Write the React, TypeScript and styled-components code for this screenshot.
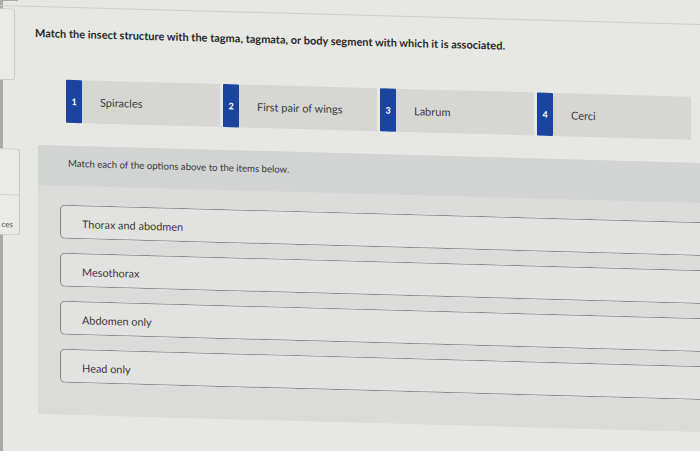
import React from 'react'
import styled, { createGlobalStyle } from 'styled-components'

const colors = {
  screen: '#e7e7e4',
  edge: '#a9a9a6',
  line: '#cfcfcb',
  ink: '#2a2a2a',
  text: '#3a3a3a',
  chip: '#d6d6d3',
  badge: '#1b449e',
  panel: '#dbdbd9',
  panelHead: '#d2d3d3',
  answer: '#e2e2e0',
  answerBorder: '#80868c',
}

const GlobalStyle = createGlobalStyle`
  html, body {
    margin: 0;
    padding: 0;
    overflow: hidden;
    background: ${colors.screen};
  }
  body {
    font-family: Lato, 'Liberation Sans', sans-serif;
  }
`

// the whole screen sits with a slight tilt
const Page = styled.div`
  width: 700px;
  height: 451px;
  display: flex;
  flex-direction: column;
  background: ${colors.screen};
  box-shadow: inset 3px 0 0 ${colors.edge};
  transform: skewY(1.55deg);
  transform-origin: 0 0;
  overflow: hidden;
`
const TopBar = styled.div`
  height: 5px;
  flex-shrink: 0;
  border-bottom: 1px solid ${colors.line};
`
const Body = styled.div`
  display: flex;
  flex: 1;
  min-height: 0;
`
const Side = styled.div`
  width: 19px;
  flex-shrink: 0;
  display: flex;
  flex-direction: column;
  padding-top: 2px;
`
const SideCard = styled.div<{ $width: number; $top: number }>`
  width: ${(p) => p.$width}px;
  margin-top: ${(p) => p.$top}px;
  border: 1px solid #c9c9c6;
  border-left: none;
  border-radius: 0 4px 4px 0;
  background: #eaeae7;
  overflow: hidden;
`
const SideRow = styled.div<{ $height: number; $divider?: boolean }>`
  height: ${(p) => p.$height}px;
  display: flex;
  justify-content: flex-end;
  align-items: flex-end;
  padding: 0 6px 5px 0;
  box-sizing: border-box;
  border-top: ${(p) => (p.$divider ? '1px solid #d3d3d0' : 'none')};
  font: 400 8px Lato, 'Liberation Sans', sans-serif;
  color: #555;
  white-space: nowrap;
`
const Main = styled.div`
  flex: 1;
  padding-left: 16px;
  display: flex;
  flex-direction: column;
  min-width: 0;
`
const Title = styled.div`
  margin-top: 19px;
  font: 700 11px/14px Lato, 'Liberation Sans', sans-serif;
  color: ${colors.ink};
  white-space: nowrap;
`
const Choices = styled.div`
  display: flex;
  gap: 3px;
  margin: 39px 0 0 31px;
`
const Choice = styled.div`
  display: flex;
  width: 154px;
  height: 43px;
`
const Badge = styled.div`
  width: 16px;
  flex-shrink: 0;
  display: flex;
  align-items: center;
  justify-content: center;
  background: ${colors.badge};
  border-radius: 1px;
  font: 700 9px Lato, 'Liberation Sans', sans-serif;
  color: #fff;
`
const ChoiceLabel = styled.div`
  flex: 1;
  display: flex;
  align-items: center;
  padding-left: 18px;
  background: ${colors.chip};
  font: 400 11px Lato, 'Liberation Sans', sans-serif;
  color: ${colors.text};
`
const Panel = styled.div`
  margin: 23px -40px 0 3px;
  background: ${colors.panel};
`
const PanelHead = styled.div`
  padding: 12px 30px 17px;
  background: ${colors.panelHead};
  font: 400 9.6px/11px Lato, 'Liberation Sans', sans-serif;
  color: ${colors.text};
`
const Answers = styled.div`
  display: flex;
  flex-direction: column;
  gap: 14px;
  padding: 19px 0 32px 22px;
`
const Answer = styled.div`
  height: 34px;
  box-sizing: border-box;
  display: flex;
  align-items: center;
  padding: 3px 0 0 21px;
  border: 1.5px solid ${colors.answerBorder};
  border-right: none;
  border-radius: 5px 0 0 5px;
  background: ${colors.answer};
  font: 400 10.9px Lato, 'Liberation Sans', sans-serif;
  color: ${colors.text};
`

const choices = ['Spiracles', 'First pair of wings', 'Labrum', 'Cerci']
const answers = ['Thorax and abodmen', 'Mesothorax', 'Abdomen only', 'Head only']

const App = () => {
  return (
    <>
      <GlobalStyle />
      <Page>
        <TopBar />
        <Body>
          <Side>
            <SideCard $width={14} $top={0}>
              <SideRow $height={70} />
            </SideCard>
            <SideCard $width={19} $top={68}>
              <SideRow $height={45} />
              <SideRow $height={40} $divider>
                ces
              </SideRow>
            </SideCard>
          </Side>
          <Main>
            <Title>
              Match the insect structure with the tagma, tagmata, or body segment with which it is
              associated.
            </Title>
            <Choices>
              {choices.map((label, i) => (
                <Choice key={label}>
                  <Badge>{i + 1}</Badge>
                  <ChoiceLabel>{label}</ChoiceLabel>
                </Choice>
              ))}
            </Choices>
            <Panel>
              <PanelHead>Match each of the options above to the items below.</PanelHead>
              <Answers>
                {answers.map((label) => (
                  <Answer key={label}>{label}</Answer>
                ))}
              </Answers>
            </Panel>
          </Main>
        </Body>
      </Page>
    </>
  )
}

export default App
